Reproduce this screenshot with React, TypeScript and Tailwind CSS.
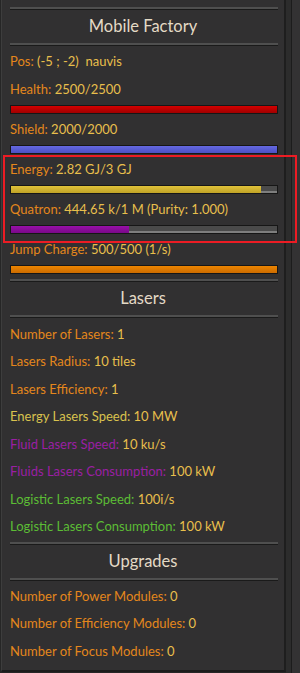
import React from 'react'

type Row = { label: string; value: string; color: string }

const font = { fontFamily: 'Lato, "Noto Sans", sans-serif' }

function Sep() {
  return <div className="h-[3px] ml-[8px] mr-[6px] bg-[#4f4f4f] border-b border-[#1a1a1a]" />
}

function Heading({ children }: { children: React.ReactNode }) {
  return (
    <div className="h-[33px] flex items-center justify-center text-[16.5px] text-[#e4dac6]">
      {children}
    </div>
  )
}

function Stat({ label, value, labelClass = 'text-[#e4871c]' }: { label: string; value: string; labelClass?: string }) {
  return (
    <div className="h-[20px] flex items-center px-[8px] text-[13px] whitespace-pre">
      <span className={labelClass}>{label}</span>
      <span className="text-[#e8bf4c]">{value}</span>
    </div>
  )
}

function Bar({ pct, fill }: { pct: number; fill: string }) {
  return (
    <div className="ml-[8px] mr-[6px] h-[9px] bg-[#161616] p-[1px] flex">
      <div className={`h-full ${fill}`} style={{ width: `${pct}%` }} />
      <div className="h-full flex-1 bg-[#4a4a4a] border-b-2 border-[#7e7e7e]" />
    </div>
  )
}

const lasers: Row[] = [
  { label: 'Number of Lasers: ', value: '1', color: 'text-[#e4871c]' },
  { label: 'Lasers Radius: ', value: '10 tiles', color: 'text-[#e4871c]' },
  { label: 'Lasers Efficiency: ', value: '1', color: 'text-[#e4871c]' },
  { label: 'Energy Lasers Speed: ', value: '10 MW', color: 'text-[#d9c24e]' },
  { label: 'Fluid Lasers Speed: ', value: '10 ku/s', color: 'text-[#9a1fa3]' },
  { label: 'Fluids Lasers Consumption: ', value: '100 kW', color: 'text-[#9a1fa3]' },
  { label: 'Logistic Lasers Speed: ', value: '100i/s', color: 'text-[#5cbd35]' },
  { label: 'Logistic Lasers Consumption: ', value: '100 kW', color: 'text-[#5cbd35]' },
]

const upgrades: Row[] = [
  { label: 'Number of Power Modules: ', value: '0', color: 'text-[#e4871c]' },
  { label: 'Number of Efficiency Modules: ', value: '0', color: 'text-[#e4871c]' },
  { label: 'Number of Focus Modules: ', value: '0', color: 'text-[#e4871c]' },
]

function ListRow({ row }: { row: Row }) {
  return (
    <div className="h-[27.5px] flex items-center px-[8px] text-[13px] whitespace-pre">
      <span className={row.color}>{row.label}</span>
      <span className="text-[#e8bf4c]">{row.value}</span>
    </div>
  )
}

export default function App() {
  return (
    <div className="w-[300px] h-[673px] bg-[#262626] flex overflow-hidden" style={font}>
      {/* main panel */}
      <div className="relative w-[285px] h-[672px] ml-[1px] bg-[#313031] border-l border-[#3d3d3d] border-r-2 border-r-[#1e1e1e] border-b-2 border-b-[#1c1c1c] pt-[7px]">
        <Sep />
        <Heading>Mobile Factory</Heading>
        <Sep />

        <div className="mt-[6px]">
          <Stat label="Pos: " value="(-5 ; -2)  nauvis" />
        </div>
        <div className="mt-[8px]">
          <Stat label="Health: " value="2500/2500" />
        </div>
        <div className="mt-[5px]">
          <Bar pct={100} fill="bg-gradient-to-b from-[#d40000] to-[#a00000]" />
        </div>
        <div className="mt-[6px]">
          <Stat label="Shield: " value="2000/2000" />
        </div>
        <div className="mt-[5px]">
          <Bar pct={100} fill="bg-gradient-to-b from-[#6468e0] to-[#4c50c4]" />
        </div>
        <div className="mt-[6px]">
          <Stat label="Energy: " value="2.82 GJ/3 GJ" />
        </div>
        <div className="mt-[5px]">
          <Bar pct={94} fill="bg-gradient-to-b from-[#e0c23a] to-[#bfa226]" />
        </div>
        <div className="mt-[6px]">
          <Stat label="Quatron: " value="444.65 k/1 M (Purity: 1.000)" />
        </div>
        <div className="mt-[5px]">
          <Bar pct={44.5} fill="bg-gradient-to-b from-[#9810a8] to-[#7a0888]" />
        </div>
        <div className="mt-[6px]">
          <Stat label="Jump Charge: " value="500/500 (1/s)" />
        </div>
        <div className="mt-[5px]">
          <Bar pct={100} fill="bg-gradient-to-b from-[#ec8400] to-[#cc6c00]" />
        </div>

        <div className="mt-[5px]">
          <Sep />
        </div>
        <Heading>Lasers</Heading>
        <Sep />
        <div className="mt-[2.5px]">
          {lasers.map((r) => (
            <ListRow key={r.label} row={r} />
          ))}
        </div>

        <div className="mt-[1px]">
          <Sep />
        </div>
        <Heading>Upgrades</Heading>
        <Sep />
        <div className="mt-[2px]">
          {upgrades.map((r) => (
            <ListRow key={r.label} row={r} />
          ))}
        </div>

        {/* highlight box */}
        <div className="absolute left-[1px] top-[155px] w-[294px] h-[88px] border-2 border-[#ec1c24] z-10" />
      </div>

      {/* neighbouring panel edge */}
      <div className="w-[5px] h-full bg-[#2c2c2c]" />
      <div className="flex-1 h-full bg-[#333233] border-l border-[#1c1c1c]" />
    </div>
  )
}
